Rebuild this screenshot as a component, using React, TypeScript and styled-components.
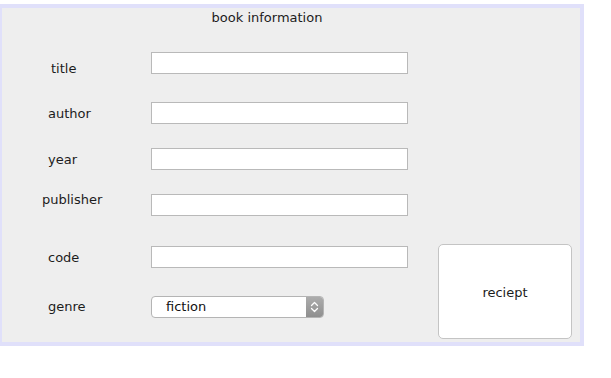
import React from "react";
import styled, { createGlobalStyle } from "styled-components";

const GlobalStyle = createGlobalStyle`
  html, body {
    margin: 0;
    padding: 0;
    background: #ffffff;
  }
  body {
    font-family: "DejaVu Sans", "Liberation Sans", sans-serif;
    font-size: 13px;
    color: #1c1c1c;
  }
`;

type Field = {
  label: string;
  top: number;
  indent: number;
  shift: number;
  kind?: "text" | "select";
};

const FIELDS: Field[] = [
  { label: "title", top: 26, indent: 49, shift: 6 },
  { label: "author", top: 28, indent: 46, shift: 1 },
  { label: "year", top: 24, indent: 46, shift: 1 },
  { label: "publisher", top: 24, indent: 40, shift: -5 },
  { label: "code", top: 30, indent: 46, shift: 1 },
  { label: "genre", top: 28, indent: 46, shift: 0, kind: "select" },
];

const App: React.FC = () => {
  return (
    <>
      <GlobalStyle />
      <Frame>
        <Heading>book information</Heading>
        <Body>
          <Form>
            {FIELDS.map((f) => (
              <Row key={f.label} $top={f.top}>
                <Label $indent={f.indent} $shift={f.shift}>
                  {f.label}
                </Label>
                {f.kind === "select" ? (
                  <SelectBox>
                    <SelectValue>fiction</SelectValue>
                    <Stepper>
                      <svg width="9" height="14" viewBox="0 0 9 14">
                        <path
                          d="M1.5 5.5 L4.5 2.5 L7.5 5.5 M1.5 8.5 L4.5 11.5 L7.5 8.5"
                          fill="none"
                          stroke="#ffffff"
                          strokeWidth="1.3"
                          strokeLinecap="round"
                          strokeLinejoin="round"
                        />
                      </svg>
                    </Stepper>
                  </SelectBox>
                ) : (
                  <TextInput type="text" />
                )}
              </Row>
            ))}
          </Form>
          <ReceiptButton type="button">reciept</ReceiptButton>
        </Body>
      </Frame>
    </>
  );
};

export default App;

const Frame = styled.div`
  margin-top: 4px;
  width: 584px;
  height: 342px;
  box-sizing: border-box;
  border: 4px solid #e0e0fa;
  border-left-width: 2px;
  background: #eeeeee;
  display: flex;
  flex-direction: column;
`;

const Heading = styled.div`
  width: 530px;
  padding-top: 2px;
  line-height: 16px;
  text-align: center;
`;

const Body = styled.div`
  flex: 1;
  display: flex;
  align-items: flex-end;
  padding-bottom: 3px;
`;

const Form = styled.div`
  align-self: flex-start;
  display: flex;
  flex-direction: column;
`;

const Row = styled.div<{ $top: number }>`
  display: flex;
  align-items: flex-start;
  height: 22px;
  margin-top: ${({ $top }) => $top}px;
`;

const Label = styled.span<{ $indent: number; $shift: number }>`
  box-sizing: border-box;
  width: 149px;
  padding-left: ${({ $indent }) => $indent}px;
  margin-top: ${({ $shift }) => $shift}px;
  line-height: 22px;
  white-space: nowrap;
`;

const TextInput = styled.input`
  box-sizing: border-box;
  width: 257px;
  height: 22px;
  margin: 0;
  padding: 0 4px;
  border: 1px solid #b9b9b9;
  border-radius: 0;
  background: #ffffff;
  outline: none;
  font: inherit;
`;

const SelectBox = styled.div`
  box-sizing: border-box;
  width: 173px;
  height: 22px;
  display: flex;
  align-items: stretch;
  border: 1px solid #b4b4b4;
  border-radius: 4px;
  background: #ffffff;
  overflow: hidden;
`;

const SelectValue = styled.span`
  flex: 1;
  padding-left: 14px;
  line-height: 20px;
  color: #111111;
`;

const Stepper = styled.span`
  width: 17px;
  display: flex;
  align-items: center;
  justify-content: center;
  background: linear-gradient(#acacac, #8f8f8f);
`;

const ReceiptButton = styled.button`
  box-sizing: border-box;
  width: 134px;
  height: 95px;
  margin-left: 30px;
  border: 1px solid #c4c4c4;
  border-radius: 5px;
  background: #ffffff;
  font: inherit;
  color: #1c1c1c;
  padding: 0;
  padding-top: 2px;
`;
